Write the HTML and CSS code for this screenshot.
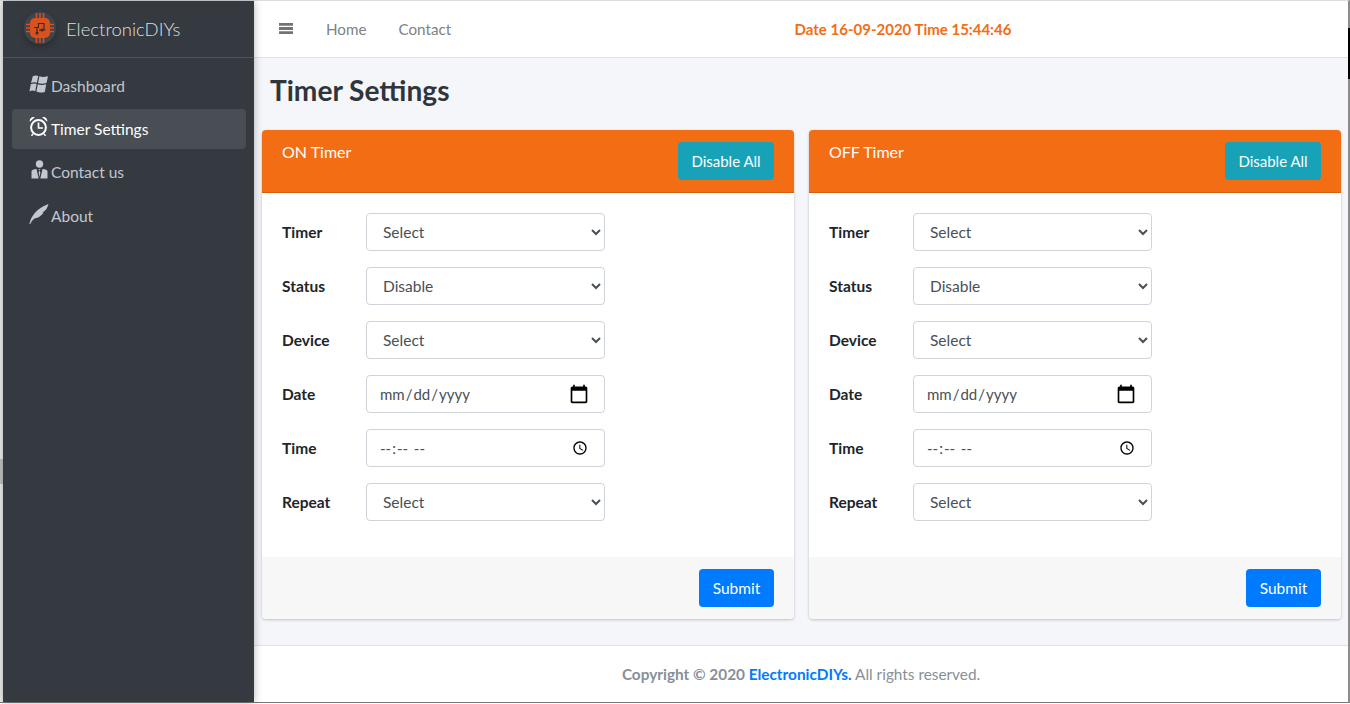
FILE: index.html
```html
<!DOCTYPE html>
<html lang="en">
<head>
<meta charset="utf-8">
<title>Timer Settings</title>
<link rel="stylesheet" href="styles.css">
</head>
<body>
<div class="window">
  <span class="edge-left"></span>
  <span class="edge-right"></span>
  <aside class="sidebar">
    <div class="brand">
      <span class="logo">
        <svg viewBox="0 0 32 32" width="32" height="32">
          <circle cx="16" cy="16" r="16" fill="#3f454b"/>
          <g stroke="#d9521d" stroke-width="1.500">
            <path d="M12.500 1v6M16 1v6M19.500 1v6M12.500 25v6M16 25v6M19.500 25v6M2 12.500h5M2 16h5M2 19.500h5M25 12.500h5M25 16h5M25 19.500h5"/>
          </g>
          <rect x="6" y="6" width="20" height="20" rx="5" fill="#d9521d"/>
          <path d="M10 15.500h4.500v-4h6M13 21v-5.500M15 18h6.500M20 18v-6.500" stroke="#3a2a24" stroke-width="1.100" fill="none"/>
          <circle cx="13" cy="21" r="1.500" fill="#3a2a24"/>
          <circle cx="18" cy="18" r="1.500" fill="#3a2a24"/>
        </svg>
      </span>
      <span class="brand-text">ElectronicDIYs</span>
    </div>
    <nav class="side-nav">
      <a class="side-link">
        <svg class="side-icon" viewBox="0 0 20 20"><path fill="currentColor" d="M3.800 3.300C5.800 2.200 7.500 2.200 9.300 3L7.800 9.800C6 9 4 9.100 2 10.100zM10.400 3.200C12.500 4.200 15 4.300 19 3.200L17.500 10.100C14 11 11.500 11 9 10zM1.800 11.300C4 10.200 6 10.200 7.600 11L6.200 18.200C4.500 17.300 2.500 17.300.4 18.400zM8.800 11.200C11 12.200 14 12.200 17.200 11.300L15.800 18.900C12.500 19.900 10 19.800 7.400 18.600z"/></svg>
        <span>Dashboard</span>
      </a>
      <a class="side-link active">
        <svg class="side-icon" viewBox="0 0 20 20"><circle cx="9.500" cy="11.500" r="7.400" fill="none" stroke="currentColor" stroke-width="2"/><path d="M9.500 6.500V12H14" fill="none" stroke="currentColor" stroke-width="1.700"/><path fill="currentColor" d="M.8 5.800C.2 2.800 2.800.4 5.800 1.200zM18.200 5.800C18.800 2.800 16.200.4 13.200 1.200z"/><path d="M4 18l-1.500 1.800M15 18l1.500 1.800" stroke="currentColor" stroke-width="1.500"/></svg>
        <span>Timer Settings</span>
      </a>
      <a class="side-link">
        <svg class="side-icon" viewBox="0 0 20 20"><circle cx="10.500" cy="5" r="3.700" fill="currentColor"/><path fill="currentColor" d="M2.500 19.500V12.500C2.500 11 4.500 10.200 7.500 10L9.700 19.500zM18.500 19.500V12.500C18.500 11 16.500 10.200 13.500 10L11.300 19.500zM10.500 11.500l-1-1.500h2zM10.500 11.500l-.8 2 .8 5 .8-5z"/></svg>
        <span>Contact us</span>
      </a>
      <a class="side-link side-link-last">
        <svg class="side-icon" viewBox="0 0 20 20"><path fill="currentColor" d="M.4 21C2 13 8 5 19.500 1C18.500 5 16.500 8 13.500 9.500L14.500 10C11.500 13.500 8.500 15 5.500 15.500C3.500 17 2.200 19 1.300 21z"/></svg>
        <span>About</span>
      </a>
    </nav>
  </aside>
  <div class="main">
    <header class="topbar">
      <svg class="burger" viewBox="0 0 14 11" width="14" height="11"><path d="M0 0h14v2.800H0zM0 4.100h14v2.800H0zM0 8.200h14V11H0z" fill="#6f7479"/></svg>
      <a class="top-link">Home</a>
      <a class="top-link">Contact</a>
      <div class="clock">Date 16-09-2020 Time 15:44:46</div>
    </header>
    <main class="content">
      <h1 class="page-title">Timer Settings</h1>
      <div class="cards">
        <section class="card">
          <div class="card-head">
            <h2 class="card-title">ON Timer</h2>
            <button class="btn btn-info" type="button">Disable All</button>
          </div>
          <div class="card-body">
            <div class="row"><label class="row-label">Timer</label><select class="control"><option>Select</option></select></div>
            <div class="row"><label class="row-label">Status</label><select class="control"><option>Disable</option></select></div>
            <div class="row"><label class="row-label">Device</label><select class="control"><option>Select</option></select></div>
            <div class="row"><label class="row-label">Date</label><input class="control control-text" type="date"></div>
            <div class="row"><label class="row-label">Time</label><input class="control control-text" type="time"></div>
            <div class="row"><label class="row-label">Repeat</label><select class="control"><option>Select</option></select></div>
          </div>
          <div class="card-foot"><button class="btn btn-primary" type="button">Submit</button></div>
        </section>
        <section class="card">
          <div class="card-head">
            <h2 class="card-title">OFF Timer</h2>
            <button class="btn btn-info" type="button">Disable All</button>
          </div>
          <div class="card-body">
            <div class="row"><label class="row-label">Timer</label><select class="control"><option>Select</option></select></div>
            <div class="row"><label class="row-label">Status</label><select class="control"><option>Disable</option></select></div>
            <div class="row"><label class="row-label">Device</label><select class="control"><option>Select</option></select></div>
            <div class="row"><label class="row-label">Date</label><input class="control control-text" type="date"></div>
            <div class="row"><label class="row-label">Time</label><input class="control control-text" type="time"></div>
            <div class="row"><label class="row-label">Repeat</label><select class="control"><option>Select</option></select></div>
          </div>
          <div class="card-foot"><button class="btn btn-primary" type="button">Submit</button></div>
        </section>
      </div>
    </main>
    <footer class="page-foot"><strong>Copyright © 2020 <a class="foot-link">ElectronicDIYs.</a></strong> All rights reserved.</footer>
  </div>
</div>
</body>
</html>
```
FILE: styles.css
```css
* { box-sizing: border-box; }
html, body { margin: 0; height: 100%; overflow: hidden; }
body {
  font-family: "Lato", "Liberation Sans", sans-serif;
  font-size: 15.5px;
  color: #212529;
  background: #fff;
}
.window {
  position: relative;
  display: flex;
  height: 703px;
  padding-left: 3px;
  background: #eeeeee;
  border-top: 1px solid #dcdce0;
  border-right: 2px solid #8c8c8c;
  border-bottom: 1px solid #777;
}
.edge-left {
  position: absolute;
  left: 0;
  top: 458px;
  width: 3px;
  height: 25px;
  background: #c4c4c4;
}
.edge-right {
  position: absolute;
  right: -2px;
  top: 27px;
  width: 2px;
  height: 51px;
  background: #000;
}
.sidebar {
  flex: 0 0 251px;
  background: #343a40;
  box-shadow: 0 0 8px rgba(0,0,0,.3);
  z-index: 1;
}
.brand {
  display: flex;
  align-items: center;
  height: 57px;
  padding-left: 21px;
  border-bottom: 1px solid #4b545c;
}
.logo { display: flex; width: 32px; height: 32px; margin: -2px 10px 0 0; border-radius: 50%; box-shadow: 0 3px 6px rgba(0,0,0,.25); }
.brand-text { font-size: 18.500px; font-weight: 300; color: rgba(255,255,255,.85); }
.side-nav { display: flex; flex-direction: column; gap: 3px; padding: 8px 8px 0 9px; }
.side-link {
  display: flex;
  align-items: center;
  height: 40px;
  padding-left: 17px;
  border-radius: 4px;
  color: #c2c7d0;
}
.side-link-last { margin-top: 1px; }
.side-link.active { background: rgba(255,255,255,.1); color: #fff; }
.side-icon { width: 20px; height: 20px; margin: -6px 2px 0 0; flex: none; overflow: visible; }
.main { flex: 1; display: flex; flex-direction: column; min-width: 0; background: #f4f6f9; }
.topbar {
  display: flex;
  align-items: center;
  height: 57px;
  flex: none;
  background: #fff;
  border-bottom: 1px solid #dee2e6;
  position: relative;
  padding-left: 25px;
  color: #7c8288;
}
.burger { margin: -1px 33px 0 0; }
.top-link { margin-right: 32px; font-size: 15.200px; }
.clock {
  position: absolute;
  left: 204px;
  right: 0;
  top: 19px;
  text-align: center;
  font-size: 15px;
  font-weight: 700;
  color: #f36d15;
}
.content { flex: 1; padding: 0 7px 0 8px; min-height: 0; }
.page-title { margin: 15px 0 23px 8px; font-size: 28.100px; line-height: 34px; font-weight: 700; color: #2f353b; }
.cards { display: flex; gap: 15px; }
.card {
  flex: 1;
  height: 489px;
  display: flex;
  flex-direction: column;
  background: #fff;
  border-radius: 4px;
  box-shadow: 0 0 1px rgba(0,0,0,.125), 0 1px 3px rgba(0,0,0,.2);
  overflow: hidden;
}
.card-head {
  height: 63px;
  flex: none;
  display: flex;
  justify-content: space-between;
  align-items: flex-start;
  padding: 12px 20px 0;
  background: #f36d15;
  border-bottom: 1px solid #d85f10;
  color: #fff;
}
.card-title { margin: 0; font-size: 16px; line-height: 20px; font-weight: 400; }
.btn {
  height: 38px;
  border: 0;
  border-radius: 4px;
  color: #fff;
  font: inherit;
  padding: 0;
}
.btn-info { background: #17a2b8; width: 96px; font-size: 15px; }
.btn-primary { background: #007bff; width: 75px; }
.card-body { flex: 1; padding: 20px 20px 0; display: flex; flex-direction: column; gap: 16px; }
.row { display: flex; align-items: center; height: 38px; }
.row-label { flex: 0 0 84px; font-weight: 700; color: #212529; }
.control {
  width: 239px;
  height: 38px;
  background: #fff;
  border: 1px solid #ced4da;
  border-radius: 4px;
  font: inherit;
  color: #495057;
  padding: 6px 12px;
}
.control-text { font-size: 15px; }
.control-text::-webkit-calendar-picker-indicator { margin-right: 1px; }
input[type="date"]::-webkit-calendar-picker-indicator {
  width: 20px;
  height: 20px;
  padding: 0;
  margin-right: 3px;
  background-size: 20px 20px;
}
.card-foot {
  height: 62px;
  flex: none;
  display: flex;
  justify-content: flex-end;
  align-items: flex-start;
  padding: 12px 20px 0;
  background: #f7f7f7;
}
.page-foot {
  height: 57px;
  flex: none;
  display: flex;
  justify-content: center;
  align-items: center;
  background: #fff;
  border-top: 1px solid #dee2e6;
  color: #869099;
  font-size: 15.350px;
  white-space: pre;
}
.foot-link { color: #007bff; }
```
